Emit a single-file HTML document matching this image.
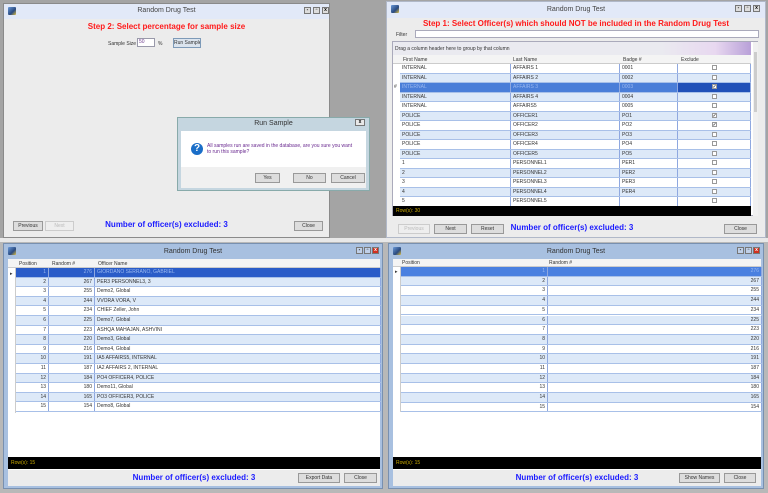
<!DOCTYPE html>
<html><head><meta charset="utf-8"><style>
*{margin:0;padding:0;box-sizing:border-box}
body{width:768px;height:493px;background:#fff;position:relative;overflow:hidden;font-family:"Liberation Sans",sans-serif;font-size:5px;color:#333}
.a{position:absolute;white-space:nowrap}
.win{position:absolute;border:1px solid #8a8a8a}
.tb{position:absolute;left:0;right:0;top:0;text-align:center;font-size:7px;color:#444}
.ic{position:absolute;left:4px;top:3px;width:8px;height:8px;background:linear-gradient(135deg,#6a9ad8,#2a4a80 60%,#e0c040);border-radius:1px}
.ctl{position:absolute;top:3px;width:7px;height:7px;border:1px solid #777;background:#ddd;font-size:5px;line-height:5px;text-align:center;color:#000;font-weight:bold}
.btn{position:absolute;height:10px;border:1px solid #999;background:#ddd;font-size:5px;text-align:center;line-height:8px;color:#333;white-space:nowrap;overflow:hidden}
.red{color:#ff1a1a;font-weight:bold;font-size:8px;text-align:center}
.blue{color:#1a1aff;font-weight:bold;font-size:8px;text-align:center;white-space:nowrap}
.grid .r{position:absolute;left:0;right:0;border-bottom:1px solid #a8c0e8;white-space:nowrap}
.grid .r:nth-child(even){background:#dde9f8}
.grid .r:nth-child(odd){background:#fff}
.grid .r span{position:absolute;top:0;bottom:0;border-right:1px solid #8fa8e0;padding:0 2px;line-height:9px;overflow:hidden}
.rt{text-align:right}
.cb{display:inline-block;width:5px;height:5px;border:1px solid #999;background:#fff;vertical-align:middle;font-size:5px;line-height:4px;color:#000;text-align:center;font-style:normal}
.stat{position:absolute;background:#000;color:#c8a800;font-size:5px;line-height:10px;padding-left:3px}
</style></head><body>
<div class="a" style="left:0;top:0;width:768px;height:240px;background:#a4a4a4"></div>
<div class="a" style="left:0;top:240px;width:768px;height:253px;background:#b8b8b8"></div>
<div class="a" style="left:0;top:238px;width:768px;height:4px;background:#e8e8e8"></div>

<!-- Window 1 -->
<div class="win" style="left:3px;top:3px;width:327px;height:235px;background:#ececec">
 <div class="tb" style="height:15px;background:#e2e9f8;line-height:14px">Random Drug Test</div>
 <div class="ic"></div>
 <div class="ctl" style="left:300px">-</div><div class="ctl" style="left:309px">▫</div><div class="ctl" style="left:318px">x</div>
 <div class="a red" style="left:0;right:0;top:18px">Step 2: Select percentage for sample size</div>
 <div class="a" style="left:104px;top:37px">Sample Size</div>
 <div class="a" style="left:133px;top:34px;width:18px;height:9px;background:#fff;border:1px solid #99a;color:#704090;padding-left:1px;line-height:7px">50</div>
 <div class="a" style="left:154px;top:37px">%</div>
 <div class="btn" style="left:169px;top:34px;width:28px;background:#dbe4ee;border-color:#7d9ab8">Run Sample</div>
 <div class="btn" style="left:9px;top:217px;width:30px">Previous</div>
 <div class="btn" style="left:41px;top:217px;width:29px;color:#bbb;border-color:#ccc;background:#eee">Next</div>
 <div class="a blue" style="left:100px;top:216px;width:125px">Number of officer(s) excluded: 3</div>
 <div class="btn" style="left:290px;top:217px;width:29px">Close</div>
</div>
<!-- dialog -->
<div class="a" style="left:177px;top:117px;width:193px;height:74px;background:#c5d6e0;border:1px solid #8aa">
 <div class="a" style="left:0;right:0;top:2px;text-align:center;font-size:7px;color:#333">Run Sample</div>
 <div class="ctl" style="left:177px;top:1px;width:10px;background:#e8e8e8">x</div>
 <div class="a" style="left:3px;top:13px;width:185px;height:36px;background:#fff"></div>
 <div class="a" style="left:3px;top:49px;width:185px;height:21px;background:#f0f0f0"></div>
 <div class="a" style="left:13px;top:25px;width:12px;height:12px;border-radius:50%;background:#1a6ec8;color:#fff;font-weight:bold;font-size:10px;line-height:12px;text-align:center">?</div>
 <div class="a" style="left:29px;top:25px;color:#6a2a90;width:150px;line-height:6px;white-space:normal">All samples run are saved in the database, are you sure you want to run this sample?</div>
 <div class="btn" style="left:77px;top:55px;width:25px">Yes</div>
 <div class="btn" style="left:115px;top:55px;width:33px">No</div>
 <div class="btn" style="left:153px;top:55px;width:34px">Cancel</div>
</div>

<!-- Window 2 -->
<div class="win" style="left:386px;top:1px;width:380px;height:237px;background:#ececec;border-color:#b0b8c8">
 <div class="tb" style="height:16px;background:#e2e9f8;line-height:16px">Random Drug Test</div>
 <div class="ic"></div>
 <div class="ctl" style="left:348px">-</div><div class="ctl" style="left:357px">▫</div><div class="ctl" style="left:366px">x</div>
 <div class="a red" style="left:0;right:0;top:17px">Step 1: Select Officer(s) which should NOT be included in the Random Drug Test</div>
 <div class="a" style="left:9px;top:30px">Filter</div>
 <div class="a" style="left:28px;top:28px;width:344px;height:8px;background:#fff;border:1px solid #aab"></div>
 <div class="a" style="left:5px;top:39px;width:366px;height:175px;background:#fff;border:1px solid #aab">
  <div class="a" style="left:0;top:0;width:358px;height:13px;background:linear-gradient(90deg,#eaeaf0 75%,#e8d8f0 90%,#b8a0d8)"><div class="a" style="left:2px;top:4px">Drag a column header here to group by that column</div></div>
  <div class="a" style="left:0;top:13px;width:358px;height:9px;background:#f4f4f4;border-bottom:1px solid #ccc">
   <div class="a" style="left:10px;top:2px">First Name</div><div class="a" style="left:120px;top:2px">Last Name</div><div class="a" style="left:230px;top:2px">Badge #</div><div class="a" style="left:288px;top:2px">Exclude</div>
  </div>
  <div class="a" style="left:360px;top:0;width:5px;height:174px;background:#f0f0f0"><div class="a" style="left:1px;top:10px;width:3px;height:60px;background:#ccc"></div></div>
  <div class="grid a" style="left:7px;top:22px;width:351px;height:143px">
   <div class="r" style="top:0;height:9.5px"><span style="left:0;width:111px">INTERNAL</span><span style="left:111px;width:109px">AFFAIRS 1</span><span style="left:220px;width:58px">0001</span><span style="left:278px;width:73px;text-align:center"><i class="cb"></i></span></div>
   <div class="r" style="top:9.5px;height:9.5px"><span style="left:0;width:111px">INTERNAL</span><span style="left:111px;width:109px">AFFAIRS 2</span><span style="left:220px;width:58px">0002</span><span style="left:278px;width:73px;text-align:center"><i class="cb"></i></span></div>
   <div class="r" style="top:19px;height:9.5px;background:#4a7ed8!important;color:#9ab8f0"><span style="left:0;width:111px">INTERNAL</span><span style="left:111px;width:109px">AFFAIRS 3</span><span style="left:220px;width:58px">0003</span><span style="left:278px;width:73px;text-align:center;background:#2050b8"><i class="cb">✓</i></span></div>
   <div class="r" style="top:28.5px;height:9.5px"><span style="left:0;width:111px">INTERNAL</span><span style="left:111px;width:109px">AFFAIRS 4</span><span style="left:220px;width:58px">0004</span><span style="left:278px;width:73px;text-align:center"><i class="cb"></i></span></div>
   <div class="r" style="top:38px;height:9.5px"><span style="left:0;width:111px">INTERNAL</span><span style="left:111px;width:109px">AFFAIRS5</span><span style="left:220px;width:58px">0005</span><span style="left:278px;width:73px;text-align:center"><i class="cb"></i></span></div>
   <div class="r" style="top:47.5px;height:9.5px"><span style="left:0;width:111px">POLICE</span><span style="left:111px;width:109px">OFFICER1</span><span style="left:220px;width:58px">PO1</span><span style="left:278px;width:73px;text-align:center"><i class="cb">✓</i></span></div>
   <div class="r" style="top:57px;height:9.5px"><span style="left:0;width:111px">POLICE</span><span style="left:111px;width:109px">OFFICER2</span><span style="left:220px;width:58px">PO2</span><span style="left:278px;width:73px;text-align:center"><i class="cb">✓</i></span></div>
   <div class="r" style="top:66.5px;height:9.5px"><span style="left:0;width:111px">POLICE</span><span style="left:111px;width:109px">OFFICER3</span><span style="left:220px;width:58px">PO3</span><span style="left:278px;width:73px;text-align:center"><i class="cb"></i></span></div>
   <div class="r" style="top:76px;height:9.5px"><span style="left:0;width:111px">POLICE</span><span style="left:111px;width:109px">OFFICER4</span><span style="left:220px;width:58px">PO4</span><span style="left:278px;width:73px;text-align:center"><i class="cb"></i></span></div>
   <div class="r" style="top:85.5px;height:9.5px"><span style="left:0;width:111px">POLICE</span><span style="left:111px;width:109px">OFFICER5</span><span style="left:220px;width:58px">PO5</span><span style="left:278px;width:73px;text-align:center"><i class="cb"></i></span></div>
   <div class="r" style="top:95px;height:9.5px"><span style="left:0;width:111px">1</span><span style="left:111px;width:109px">PERSONNEL1</span><span style="left:220px;width:58px">PER1</span><span style="left:278px;width:73px;text-align:center"><i class="cb"></i></span></div>
   <div class="r" style="top:104.5px;height:9.5px"><span style="left:0;width:111px">2</span><span style="left:111px;width:109px">PERSONNEL2</span><span style="left:220px;width:58px">PER2</span><span style="left:278px;width:73px;text-align:center"><i class="cb"></i></span></div>
   <div class="r" style="top:114px;height:9.5px"><span style="left:0;width:111px">3</span><span style="left:111px;width:109px">PERSONNEL3</span><span style="left:220px;width:58px">PER3</span><span style="left:278px;width:73px;text-align:center"><i class="cb"></i></span></div>
   <div class="r" style="top:123.5px;height:9.5px"><span style="left:0;width:111px">4</span><span style="left:111px;width:109px">PERSONNEL4</span><span style="left:220px;width:58px">PER4</span><span style="left:278px;width:73px;text-align:center"><i class="cb"></i></span></div>
   <div class="r" style="top:133px;height:9.5px"><span style="left:0;width:111px">5</span><span style="left:111px;width:109px">PERSONNEL5</span><span style="left:220px;width:58px"></span><span style="left:278px;width:73px;text-align:center"><i class="cb"></i></span></div>
  </div>
  <div class="a" style="left:1px;top:42px;font-size:5px">#</div>
  <div class="stat" style="left:0;top:164px;width:358px">Row(s): 30</div>
 </div>
 <div class="btn" style="left:11px;top:222px;width:32px;color:#bbb;border-color:#ccc;background:#eee">Previous</div>
 <div class="btn" style="left:47px;top:222px;width:33px">Next</div>
 <div class="btn" style="left:84px;top:222px;width:33px">Reset</div>
 <div class="a blue" style="left:120px;top:221px;width:130px">Number of officer(s) excluded: 3</div>
 <div class="btn" style="left:337px;top:222px;width:33px">Close</div>
</div>

<!-- Window 3 -->
<div class="win" style="left:3px;top:243px;width:380px;height:246px;background:#a8c0e0;border-color:#7890b0">
 <div class="tb" style="height:15px;line-height:15px;color:#333">Random Drug Test</div>
 <div class="ic"></div>
 <div class="ctl" style="left:352px;background:#c0d0e8">-</div><div class="ctl" style="left:360px;background:#c0d0e8">▫</div><div class="ctl" style="left:368px;background:#d03020;color:#fff">x</div>
 <div class="a" style="left:4px;top:15px;width:372px;height:212px;background:#fff">
  <div class="a" style="left:0;top:0;width:372px;height:9px;background:#f4f4f4;border-bottom:1px solid #ccc">
   <div class="a" style="left:11px;top:2px">Position</div><div class="a" style="left:44px;top:2px">Random #</div><div class="a" style="left:90px;top:2px">Officer Name</div>
  </div>
  <div class="a" style="left:2px;top:12px">▸</div>
  <div class="grid a" style="left:7px;top:9px;width:365px;height:145px;border-left:1px solid #ccc">
   <div class="r" style="top:0;height:9.6px;background:#2a5cc8!important;color:#9ab8f0"><span class="rt" style="left:0;width:33px">1</span><span class="rt" style="left:33px;width:46px">276</span><span style="left:79px;width:286px">GIORDANO SERRANO, GABRIEL</span></div>
   <div class="r" style="top:9.6px;height:9.6px"><span class="rt" style="left:0;width:33px">2</span><span class="rt" style="left:33px;width:46px">267</span><span style="left:79px;width:286px">PER3 PERSONNEL3, 3</span></div>
   <div class="r" style="top:19.2px;height:9.6px"><span class="rt" style="left:0;width:33px">3</span><span class="rt" style="left:33px;width:46px">255</span><span style="left:79px;width:286px">Demo2, Global</span></div>
   <div class="r" style="top:28.8px;height:9.6px"><span class="rt" style="left:0;width:33px">4</span><span class="rt" style="left:33px;width:46px">244</span><span style="left:79px;width:286px">VVORA VORA, V</span></div>
   <div class="r" style="top:38.4px;height:9.6px"><span class="rt" style="left:0;width:33px">5</span><span class="rt" style="left:33px;width:46px">234</span><span style="left:79px;width:286px">CHIEF Zeller, John</span></div>
   <div class="r" style="top:48px;height:9.6px"><span class="rt" style="left:0;width:33px">6</span><span class="rt" style="left:33px;width:46px">225</span><span style="left:79px;width:286px">Demo7, Global</span></div>
   <div class="r" style="top:57.6px;height:9.6px"><span class="rt" style="left:0;width:33px">7</span><span class="rt" style="left:33px;width:46px">223</span><span style="left:79px;width:286px">ASHQA MAHAJAN, ASHVINI</span></div>
   <div class="r" style="top:67.2px;height:9.6px"><span class="rt" style="left:0;width:33px">8</span><span class="rt" style="left:33px;width:46px">220</span><span style="left:79px;width:286px">Demo3, Global</span></div>
   <div class="r" style="top:76.8px;height:9.6px"><span class="rt" style="left:0;width:33px">9</span><span class="rt" style="left:33px;width:46px">216</span><span style="left:79px;width:286px">Demo4, Global</span></div>
   <div class="r" style="top:86.4px;height:9.6px"><span class="rt" style="left:0;width:33px">10</span><span class="rt" style="left:33px;width:46px">191</span><span style="left:79px;width:286px">IA5 AFFAIRS5, INTERNAL</span></div>
   <div class="r" style="top:96px;height:9.6px"><span class="rt" style="left:0;width:33px">11</span><span class="rt" style="left:33px;width:46px">187</span><span style="left:79px;width:286px">IA2 AFFAIRS 2, INTERNAL</span></div>
   <div class="r" style="top:105.6px;height:9.6px"><span class="rt" style="left:0;width:33px">12</span><span class="rt" style="left:33px;width:46px">184</span><span style="left:79px;width:286px">PO4 OFFICER4, POLICE</span></div>
   <div class="r" style="top:115.2px;height:9.6px"><span class="rt" style="left:0;width:33px">13</span><span class="rt" style="left:33px;width:46px">180</span><span style="left:79px;width:286px">Demo11, Global</span></div>
   <div class="r" style="top:124.8px;height:9.6px"><span class="rt" style="left:0;width:33px">14</span><span class="rt" style="left:33px;width:46px">165</span><span style="left:79px;width:286px">PO3 OFFICER3, POLICE</span></div>
   <div class="r" style="top:134.4px;height:9.6px"><span class="rt" style="left:0;width:33px">15</span><span class="rt" style="left:33px;width:46px">154</span><span style="left:79px;width:286px">Demo8, Global</span></div>
  </div>
 </div>
 <div class="stat" style="left:4px;top:213px;width:372px;height:12px;line-height:12px">Row(s): 15</div>
 <div class="a" style="left:4px;top:226px;width:372px;height:16px;background:#ececec"></div>
 <div class="a blue" style="left:120px;top:229px;width:140px">Number of officer(s) excluded: 3</div>
 <div class="btn" style="left:294px;top:229px;width:42px">Export Data</div>
 <div class="btn" style="left:340px;top:229px;width:33px">Close</div>
</div>

<!-- Window 4 -->
<div class="win" style="left:388px;top:243px;width:376px;height:246px;background:#a8c0e0;border-color:#7890b0">
 <div class="tb" style="height:15px;line-height:15px;color:#333">Random Drug Test</div>
 <div class="ic"></div>
 <div class="ctl" style="left:348px;background:#c0d0e8">-</div><div class="ctl" style="left:356px;background:#c0d0e8">▫</div><div class="ctl" style="left:364px;background:#d03020;color:#fff">x</div>
 <div class="a" style="left:4px;top:15px;width:368px;height:212px;background:#fff">
  <div class="a" style="left:0;top:0;width:368px;height:8px;background:#f4f4f4;border-bottom:1px solid #ccc">
   <div class="a" style="left:9px;top:1px">Position</div><div class="a" style="left:156px;top:1px">Random #</div>
  </div>
  <div class="a" style="left:2px;top:10px">▸</div>
  <div class="grid a" style="left:7px;top:8px;width:361px;height:145px;border-left:1px solid #ccc">
   <div class="r" style="top:0;height:9.7px;background:#4a80e0!important;color:#9ab8f0"><span class="rt" style="left:0;width:147px">1</span><span class="rt" style="left:147px;width:214px">276</span></div>
   <div class="r" style="top:9.7px;height:9.7px"><span class="rt" style="left:0;width:147px">2</span><span class="rt" style="left:147px;width:214px">267</span></div>
   <div class="r" style="top:19.4px;height:9.7px"><span class="rt" style="left:0;width:147px">3</span><span class="rt" style="left:147px;width:214px">255</span></div>
   <div class="r" style="top:29.1px;height:9.7px"><span class="rt" style="left:0;width:147px">4</span><span class="rt" style="left:147px;width:214px">244</span></div>
   <div class="r" style="top:38.8px;height:9.7px"><span class="rt" style="left:0;width:147px">5</span><span class="rt" style="left:147px;width:214px">234</span></div>
   <div class="r" style="top:48.5px;height:9.7px"><span class="rt" style="left:0;width:147px">6</span><span class="rt" style="left:147px;width:214px">225</span></div>
   <div class="r" style="top:58.2px;height:9.7px"><span class="rt" style="left:0;width:147px">7</span><span class="rt" style="left:147px;width:214px">223</span></div>
   <div class="r" style="top:67.9px;height:9.7px"><span class="rt" style="left:0;width:147px">8</span><span class="rt" style="left:147px;width:214px">220</span></div>
   <div class="r" style="top:77.6px;height:9.7px"><span class="rt" style="left:0;width:147px">9</span><span class="rt" style="left:147px;width:214px">216</span></div>
   <div class="r" style="top:87.3px;height:9.7px"><span class="rt" style="left:0;width:147px">10</span><span class="rt" style="left:147px;width:214px">191</span></div>
   <div class="r" style="top:97px;height:9.7px"><span class="rt" style="left:0;width:147px">11</span><span class="rt" style="left:147px;width:214px">187</span></div>
   <div class="r" style="top:106.7px;height:9.7px"><span class="rt" style="left:0;width:147px">12</span><span class="rt" style="left:147px;width:214px">184</span></div>
   <div class="r" style="top:116.4px;height:9.7px"><span class="rt" style="left:0;width:147px">13</span><span class="rt" style="left:147px;width:214px">180</span></div>
   <div class="r" style="top:126.1px;height:9.7px"><span class="rt" style="left:0;width:147px">14</span><span class="rt" style="left:147px;width:214px">165</span></div>
   <div class="r" style="top:135.8px;height:9.7px"><span class="rt" style="left:0;width:147px">15</span><span class="rt" style="left:147px;width:214px">154</span></div>
  </div>
 </div>
 <div class="stat" style="left:4px;top:213px;width:368px;height:12px;line-height:12px">Row(s): 15</div>
 <div class="a" style="left:4px;top:226px;width:368px;height:16px;background:#ececec"></div>
 <div class="a blue" style="left:118px;top:229px;width:140px">Number of officer(s) excluded: 3</div>
 <div class="btn" style="left:290px;top:229px;width:41px">Show Names</div>
 <div class="btn" style="left:335px;top:229px;width:32px">Close</div>
</div>
</body></html>
